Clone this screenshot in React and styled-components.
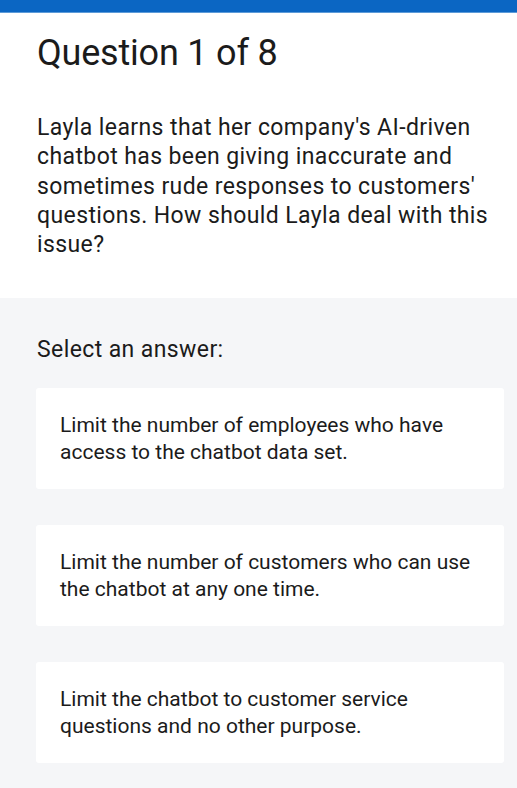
import styled, { createGlobalStyle } from "styled-components";

const GlobalStyle = createGlobalStyle`
  html, body {
    margin: 0;
    padding: 0;
    background: #f5f6f8;
  }
  body {
    font-family: Roboto, "Liberation Sans", Arial, sans-serif;
    color: #1b1b1b;
  }
  * { box-sizing: border-box; }
`;

const TopBar = styled.div`
  height: 13px;
  background: #0b66c3;
  border-bottom: 1px solid #5d9bd8;
`;

const QuestionPanel = styled.section`
  background: #fff;
  padding: 18px 20px 0 37px;
  height: 285px;
`;

const Title = styled.h1`
  margin: 0;
  font-size: 36px;
  font-weight: 400;
  line-height: 44px;
  letter-spacing: -0.2px;
`;

const Prompt = styled.p`
  margin: 38px 0 0;
  font-size: 23px;
  line-height: 29.3px;
  letter-spacing: 0.4px;
`;

const AnswerPanel = styled.section`
  padding: 38px 13px 26px 36px;
`;

const Label = styled.h2`
  margin: 0 0 24px 1px;
  font-size: 23px;
  font-weight: 400;
  line-height: 28px;
  letter-spacing: 0.4px;
`;

const Options = styled.div`
  display: flex;
  flex-direction: column;
  gap: 36px;
`;

const Option = styled.button`
  display: flex;
  align-items: center;
  min-height: 101px;
  width: 100%;
  padding: 20px 24px;
  border: none;
  border-radius: 3px;
  background: #fff;
  text-align: left;
  font-family: inherit;
  font-size: 21px;
  line-height: 26.7px;
  letter-spacing: 0;
  color: #1b1b1b;
  cursor: pointer;
`;

const answers = [
  "Limit the number of employees who have access to the chatbot data set.",
  "Limit the number of customers who can use the chatbot at any one time.",
  "Limit the chatbot to customer service questions and no other purpose.",
];

export default function App() {
  return (
    <>
      <GlobalStyle />
      <TopBar />
      <QuestionPanel>
        <Title>Question 1 of 8</Title>
        <Prompt>
          Layla learns that her company's AI-driven chatbot has been giving
          inaccurate and sometimes rude responses to customers' questions. How
          should Layla deal with this issue?
        </Prompt>
      </QuestionPanel>
      <AnswerPanel>
        <Label>Select an answer:</Label>
        <Options>
          {answers.map((a) => (
            <Option key={a}>{a}</Option>
          ))}
        </Options>
      </AnswerPanel>
    </>
  );
}
